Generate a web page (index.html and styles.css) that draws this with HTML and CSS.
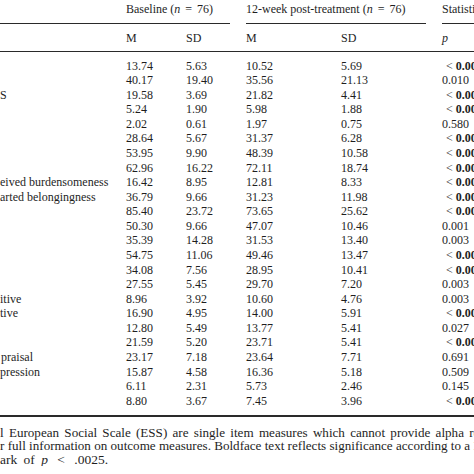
FILE: index.html
```html
<!DOCTYPE html>
<html>
<head>
<meta charset="utf-8">
<link rel="stylesheet" href="styles.css">
</head>
<body>
<div class="page">
<table class="data">
<colgroup>
<col class="c-label"><col class="c-m1"><col class="c-sd1"><col class="c-m2"><col class="c-sd2"><col class="c-p">
</colgroup>
<thead>
<tr class="grp-row">
<th><div class="grp">&nbsp;</div></th>
<th colspan="2"><div class="grp grp-gap">Baseline (<i>n</i> <span class="eq">=</span> 76)</div></th>
<th colspan="2"><div class="grp grp-gap">12-week post-treatment (<i>n</i> <span class="eq">=</span> 76)</div></th>
<th><div class="grp">Statistics</div></th>
</tr>
<tr class="sub-row">
<th></th><th>M</th><th>SD</th><th>M</th><th>SD</th><th><i>p</i></th>
</tr>
</thead>
<tbody>
<tr><td></td><td>13.74</td><td>5.63</td><td>10.52</td><td>5.69</td><td><span class="lt">&lt;</span> <b>0.001</b></td></tr>
<tr><td></td><td>40.17</td><td>19.40</td><td>35.56</td><td>21.13</td><td>0.010</td></tr>
<tr><td>S</td><td>19.58</td><td>3.69</td><td>21.82</td><td>4.41</td><td><span class="lt">&lt;</span> <b>0.001</b></td></tr>
<tr><td></td><td>5.24</td><td>1.90</td><td>5.98</td><td>1.88</td><td><span class="lt">&lt;</span> <b>0.001</b></td></tr>
<tr><td></td><td>2.02</td><td>0.61</td><td>1.97</td><td>0.75</td><td>0.580</td></tr>
<tr><td></td><td>28.64</td><td>5.67</td><td>31.37</td><td>6.28</td><td><span class="lt">&lt;</span> <b>0.001</b></td></tr>
<tr><td></td><td>53.95</td><td>9.90</td><td>48.39</td><td>10.58</td><td><span class="lt">&lt;</span> <b>0.001</b></td></tr>
<tr><td></td><td>62.96</td><td>16.22</td><td>72.11</td><td>18.74</td><td><span class="lt">&lt;</span> <b>0.001</b></td></tr>
<tr><td>eived burdensomeness</td><td>16.42</td><td>8.95</td><td>12.81</td><td>8.33</td><td><span class="lt">&lt;</span> <b>0.001</b></td></tr>
<tr><td>arted belongingness</td><td>36.79</td><td>9.66</td><td>31.23</td><td>11.98</td><td><span class="lt">&lt;</span> <b>0.001</b></td></tr>
<tr><td></td><td>85.40</td><td>23.72</td><td>73.65</td><td>25.62</td><td><span class="lt">&lt;</span> <b>0.001</b></td></tr>
<tr><td></td><td>50.30</td><td>9.66</td><td>47.07</td><td>10.46</td><td>0.001</td></tr>
<tr><td></td><td>35.39</td><td>14.28</td><td>31.53</td><td>13.40</td><td>0.003</td></tr>
<tr><td></td><td>54.75</td><td>11.06</td><td>49.46</td><td>13.47</td><td><span class="lt">&lt;</span> <b>0.001</b></td></tr>
<tr><td></td><td>34.08</td><td>7.56</td><td>28.95</td><td>10.41</td><td><span class="lt">&lt;</span> <b>0.001</b></td></tr>
<tr><td></td><td>27.55</td><td>5.45</td><td>29.70</td><td>7.20</td><td>0.003</td></tr>
<tr><td>itive</td><td>8.96</td><td>3.92</td><td>10.60</td><td>4.76</td><td>0.003</td></tr>
<tr><td>tive</td><td>16.90</td><td>4.95</td><td>14.00</td><td>5.91</td><td><span class="lt">&lt;</span> <b>0.001</b></td></tr>
<tr><td></td><td>12.80</td><td>5.49</td><td>13.77</td><td>5.41</td><td>0.027</td></tr>
<tr><td></td><td>21.59</td><td>5.20</td><td>23.71</td><td>5.41</td><td><span class="lt">&lt;</span> <b>0.001</b></td></tr>
<tr><td class="indent">praisal</td><td>23.17</td><td>7.18</td><td>23.64</td><td>7.71</td><td>0.691</td></tr>
<tr><td>pression</td><td>15.87</td><td>4.58</td><td>16.36</td><td>5.18</td><td>0.509</td></tr>
<tr><td></td><td>6.11</td><td>2.31</td><td>5.73</td><td>2.46</td><td>0.145</td></tr>
<tr class="last"><td></td><td>8.80</td><td>3.67</td><td>7.45</td><td>3.96</td><td><span class="lt">&lt;</span> <b>0.001</b></td></tr>
</tbody>
</table>
<div class="foot">
<div class="fn fn1">l European Social Scale (ESS) are single item measures which cannot provide alpha reliability</div>
<div class="fn fn2">r full information on outcome measures. Boldface text reflects significance according to a Bonferroni</div>
<div class="fn fn3">ark of <i>p</i> <span class="rel">&lt;</span> .0025.</div>
</div>
</div>
</body>
</html>
```
FILE: styles.css
```css
html, body {
  margin: 0;
  padding: 0;
  background: #ffffff;
}
body {
  width: 474px;
  height: 474px;
  overflow: hidden;
  font-family: "Liberation Serif", "Times New Roman", serif;
  font-size: 12px;
  color: #1e1e1e;
}
.page {
  width: 474px;
  overflow: hidden;
}
table.data {
  border-collapse: separate;
  border-spacing: 0;
  table-layout: fixed;
  width: 560px;
}
.c-label { width: 126px; }
.c-m1 { width: 60px; }
.c-sd1 { width: 60px; }
.c-m2 { width: 95px; }
.c-sd2 { width: 101px; }
.c-p { width: 118px; }

th, td {
  padding: 0;
  text-align: left;
  font-weight: normal;
  white-space: nowrap;
  overflow: visible;
  vertical-align: top;
}
.grp-row th {
  padding-top: 2px;
}
.grp {
  line-height: 14px;
  padding-bottom: 7px;
  border-bottom: 1px solid #2a2a2a;
}
.grp-gap {
  margin-right: 16px;
}
.eq {
  padding: 0 2px;
}
.sub-row th {
  padding-top: 7px;
  padding-bottom: 6px;
  line-height: 14px;
  border-bottom: 1.5px solid #2a2a2a;
}
tbody td {
  line-height: 14.58px;
  height: 14.58px;
}
tbody tr:first-child td {
  padding-top: 6.5px;
}
tbody tr.last td {
  padding-bottom: 6.8px;
  border-bottom: 2px solid #2a2a2a;
}
.lt {
  padding-left: 4px;
}
.indent {
  padding-left: 1px;
}
.foot {
  margin-top: 8.5px;
}
.fn {
  white-space: nowrap;
  line-height: 13.5px;
  font-size: 13.1px;
}
.fn1 {
  word-spacing: 2px;
}
.fn3 {
  font-size: 13.5px;
  word-spacing: 3px;
}
.rel {
  padding: 0 3px;
}
```
